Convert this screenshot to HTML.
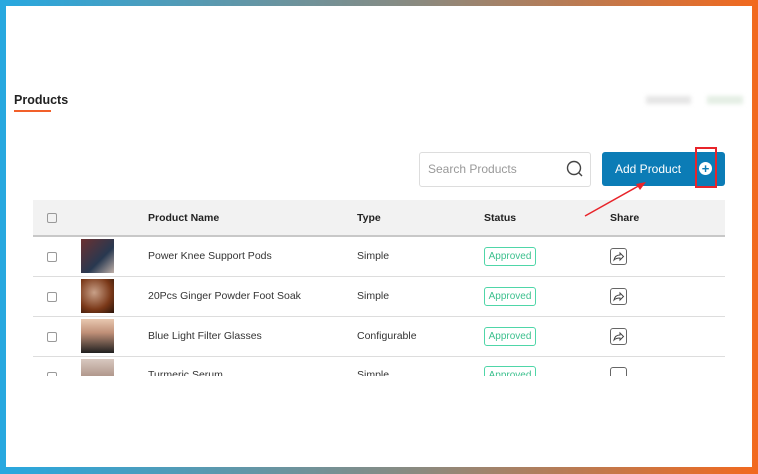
<!DOCTYPE html><html><head><style>
body{margin:0;width:758px;height:474px;overflow:hidden;background:linear-gradient(90deg,#27a8e0,#8a8a80 55%,#f2691e);font-family:"Liberation Sans",sans-serif;}
.in{position:absolute;left:6px;top:6px;width:746px;height:461px;background:#fff}
.a{position:absolute}
.t{font-size:10.5px;color:#333}
.cb{position:absolute;left:47px;width:8px;height:8px;border:1px solid #999;border-radius:2px}
.badge{position:absolute;left:484px;width:50px;height:17px;border:1px solid #4fd6a8;border-radius:3px;color:#3cc08e;font-size:10px;text-align:center;line-height:17px}
.sh{position:absolute;left:610px;width:15px;height:15px;border:1px solid #666;border-radius:3px}
.row{position:absolute;left:33px;width:692px;height:1px;background:#ddd}
</style></head><body>
<div class="in"></div>
<div class="a" style="left:14px;top:93px;font-size:12.5px;font-weight:bold;color:#222">Products</div>
<div class="a" style="left:14px;top:110px;width:37px;height:2px;background:#f2602a"></div>
<div class="a" style="left:646px;top:96px;width:45px;height:8px;background:#e6e6e6;filter:blur(2px)"></div>
<div class="a" style="left:707px;top:96px;width:36px;height:8px;background:#e4eee4;filter:blur(2px)"></div>
<div class="a" style="left:419px;top:152px;width:170px;height:33px;border:1px solid #ddd;border-radius:3px"></div>
<div class="a" style="left:428px;top:162px;font-size:12px;color:#999">Search Products</div>
<svg class="a" style="left:565px;top:159px" width="20" height="20"><circle cx="9" cy="9" r="6.5" fill="none" stroke="#444" stroke-width="1.4"/><line x1="13.5" y1="13.5" x2="17" y2="17" stroke="#444" stroke-width="1.4"/></svg>
<div class="a" style="left:602px;top:152px;width:123px;height:34px;background:#0b7cb6;border-radius:3px"></div>
<div class="a" style="left:615px;top:162px;font-size:12px;color:#fff">Add Product</div>
<div class="a" style="left:699px;top:162px;width:13px;height:13px;border-radius:50%;background:#fff;color:#0b7cb6;font-size:13px;font-weight:bold;line-height:13px;text-align:center">+</div>
<div class="a" style="left:695px;top:147px;width:22px;height:41px;border:2px solid #e8242a;box-sizing:border-box"></div>
<div class="a" style="left:33px;top:200px;width:692px;height:35px;background:#f2f2f2;border-bottom:2px solid #c8c8c8"></div>
<div class="cb" style="top:213px"></div>
<div class="a t" style="left:148px;top:212px;font-weight:bold;color:#222">Product Name</div>
<div class="a t" style="left:357px;top:212px;font-weight:bold;color:#222">Type</div>
<div class="a t" style="left:484px;top:212px;font-weight:bold;color:#222">Status</div>
<div class="a t" style="left:610px;top:212px;font-weight:bold;color:#222">Share</div>
<svg class="a" style="left:580px;top:178px" width="70" height="42"><line x1="5" y1="38" x2="62" y2="6" stroke="#e8242a" stroke-width="1.5"/><polygon points="66,4 56,6 60,12" fill="#e8242a"/></svg>
<div style="position:absolute;left:0;top:237px;width:758px;height:139px;overflow:hidden">
<div style="position:absolute;left:0;top:-237px;width:758px;height:474px">
<div class="cb" style="top:252px"></div><div class="a" style="left:81px;top:239px;width:33px;height:34px;background:linear-gradient(135deg,#6b3030,#283850 60%,#c0b0a8)"></div>
<div class="a t" style="left:148px;top:250px">Power Knee Support Pods</div><div class="a t" style="left:357px;top:250px">Simple</div><div class="badge" style="top:247px">Approved</div><div class="sh" style="top:248px"><svg width="15" height="15"><path d="M3 11 Q4 6 9 6 L9 4 L12.5 7.5 L9 11 L9 9 Q5 9 3 11Z" fill="none" stroke="#444" stroke-width="1"/></svg></div>
<div class="row" style="top:276px"></div>
<div class="cb" style="top:292px"></div><div class="a" style="left:81px;top:279px;width:33px;height:34px;background:radial-gradient(circle at 40% 40%,#c8a088,#7a3818 60%,#2a1408)"></div>
<div class="a t" style="left:148px;top:290px">20Pcs Ginger Powder Foot Soak</div><div class="a t" style="left:357px;top:290px">Simple</div><div class="badge" style="top:287px">Approved</div><div class="sh" style="top:288px"><svg width="15" height="15"><path d="M3 11 Q4 6 9 6 L9 4 L12.5 7.5 L9 11 L9 9 Q5 9 3 11Z" fill="none" stroke="#444" stroke-width="1"/></svg></div>
<div class="row" style="top:316px"></div>
<div class="cb" style="top:332px"></div><div class="a" style="left:81px;top:319px;width:33px;height:34px;background:linear-gradient(180deg,#e8c8b0,#c09078 40%,#202020)"></div>
<div class="a t" style="left:148px;top:330px">Blue Light Filter Glasses</div><div class="a t" style="left:357px;top:330px">Configurable</div><div class="badge" style="top:327px">Approved</div><div class="sh" style="top:328px"><svg width="15" height="15"><path d="M3 11 Q4 6 9 6 L9 4 L12.5 7.5 L9 11 L9 9 Q5 9 3 11Z" fill="none" stroke="#444" stroke-width="1"/></svg></div>
<div class="row" style="top:356px"></div>
<div class="cb" style="top:372px"></div><div class="a" style="left:81px;top:359px;width:33px;height:34px;background:linear-gradient(180deg,#d8c8c0,#8a6858)"></div>
<div class="a t" style="left:148px;top:369px">Turmeric Serum</div><div class="a t" style="left:357px;top:369px">Simple</div><div class="badge" style="top:366px">Approved</div><div class="sh" style="top:367px"></div>
</div></div>
</body></html>
